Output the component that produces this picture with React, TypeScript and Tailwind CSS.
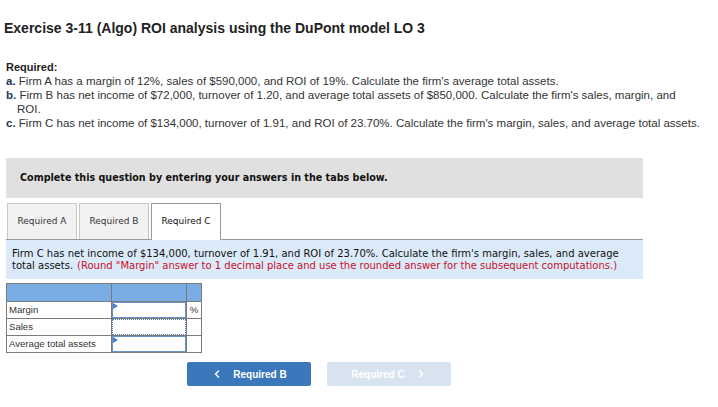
import { ChevronLeft, ChevronRight } from "lucide-react";

const sans = { fontFamily: '"Liberation Sans", Arial, sans-serif' };
const verdana = { fontFamily: '"DejaVu Sans", Verdana, sans-serif' };

const parts = [
  {
    letter: "a.",
    text: "Firm A has a margin of 12%, sales of $590,000, and ROI of 19%. Calculate the firm's average total assets.",
  },
  {
    letter: "b.",
    text: "Firm B has net income of $72,000, turnover of 1.20, and average total assets of $850,000. Calculate the firm's sales, margin, and ROI.",
  },
  {
    letter: "c.",
    text: "Firm C has net income of $134,000, turnover of 1.91, and ROI of 23.70%. Calculate the firm's margin, sales, and average total assets.",
  },
];

const rows = [
  { label: "Margin", unit: "%", kind: "solid" },
  { label: "Sales", unit: "", kind: "dotted" },
  { label: "Average total assets", unit: "", kind: "solid" },
];

const InputCell = ({ kind }: { kind: string }) => (
  <div
    className={
      kind === "dotted"
        ? "relative h-[16px] border border-dotted border-[#4a7fc1]"
        : "relative h-[16px] border border-[#6b93c6]"
    }
  >
    {kind !== "dotted" && (
      <span className="absolute left-0 top-0 h-0 w-0 border-t-[3px] border-b-[3px] border-l-[5px] border-t-transparent border-b-transparent border-l-[#4a7fc1]" />
    )}
  </div>
);

export default function App() {
  return (
    <div className="h-[407px] w-[718px] bg-white text-[#333]" style={sans}>
      <div className="pl-[4px] pt-[19px]">
        <h1 className="text-[14px] font-bold leading-[18px] text-[#222]">
          Exercise 3-11 (Algo) ROI analysis using the DuPont model LO 3
        </h1>
      </div>

      <div className="pl-[6px] pt-[23px]">
        <p className="text-[11px] font-bold leading-[14px] text-[#222]">Required:</p>
        <ul className="w-[695px] text-[11.5px] leading-[14px]">
          {parts.map((p) => (
            <li key={p.letter} className="pl-[11px] -indent-[11px]">
              <span className="font-bold text-[#1d3557]">{p.letter}</span> {p.text}
            </li>
          ))}
        </ul>
      </div>

      <div
        className="ml-[6px] mt-[28px] flex h-[40px] w-[637px] items-center bg-[#e0e0e0] pl-[14px]"
        style={verdana}
      >
        <span className="text-[9.6px] font-bold text-[#111]">
          Complete this question by entering your answers in the tabs below.
        </span>
      </div>

      <div className="ml-[6px] w-[637px]" style={verdana}>
        <div className="mt-[5px] flex gap-[2px] border-b border-[#999] pl-[1px]">
          <div className="flex h-[36px] w-[70px] items-center justify-center border border-b-0 border-[#c8c8c8] bg-[#f2f2f2] text-[9px] text-[#333]">
            Required A
          </div>
          <div className="flex h-[36px] w-[70px] items-center justify-center border border-b-0 border-[#c8c8c8] bg-[#f2f2f2] text-[9px] text-[#333]">
            Required B
          </div>
          <div className="-mb-px flex h-[37px] w-[70px] items-center justify-center border border-b-0 border-[#999] bg-white text-[9px] text-[#111]">
            Required C
          </div>
        </div>

        <div className="h-[39px] bg-[#dbeaf8] pl-[6px] pt-[8px] text-[10px] leading-[12px] text-[#111]">
          <div>
            Firm C has net income of $134,000, turnover of 1.91, and ROI of 23.70%. Calculate the
            firm's margin, sales, and average
          </div>
          <div className="flex gap-[4px] whitespace-nowrap">
            <span>total assets.</span>
            <span className="text-[#c8102e]">
              (Round "Margin" answer to 1 decimal place and use the rounded answer for the
              subsequent computations.)
            </span>
          </div>
        </div>
      </div>

      <table className="ml-[6px] mt-[4px] border-collapse text-[9.6px] text-[#333]">
        <tbody>
          <tr className="h-[18px] bg-[#7aade3]">
            <td className="w-[105px] border border-[#7a7a7a] p-0" />
            <td className="w-[75px] border border-[#7a7a7a] p-0" />
            <td className="w-[15px] border border-[#7a7a7a] p-0" />
          </tr>
          {rows.map((r) => (
            <tr key={r.label} className="h-[17px]">
              <td className="border border-[#7a7a7a] p-0 pl-[2px] leading-[14px]">{r.label}</td>
              <td className="border border-[#7a7a7a] p-0">
                <InputCell kind={r.kind} />
              </td>
              <td className="border border-[#7a7a7a] p-0 text-center leading-[14px]">{r.unit}</td>
            </tr>
          ))}
        </tbody>
      </table>

      <div className="ml-[187px] mt-[9px] flex gap-[16px]">
        <button className="flex h-[24px] w-[124px] items-center justify-center gap-[10px] rounded-[2px] bg-[#3b77bb] text-[10px] font-bold text-white">
          <ChevronLeft size={12} strokeWidth={3} />
          Required B
        </button>
        <button className="flex h-[24px] w-[124px] items-center justify-center gap-[10px] rounded-[2px] bg-[#d8e3f0] text-[10px] font-bold text-white">
          Required C
          <ChevronRight size={12} strokeWidth={3} />
        </button>
      </div>
    </div>
  );
}
